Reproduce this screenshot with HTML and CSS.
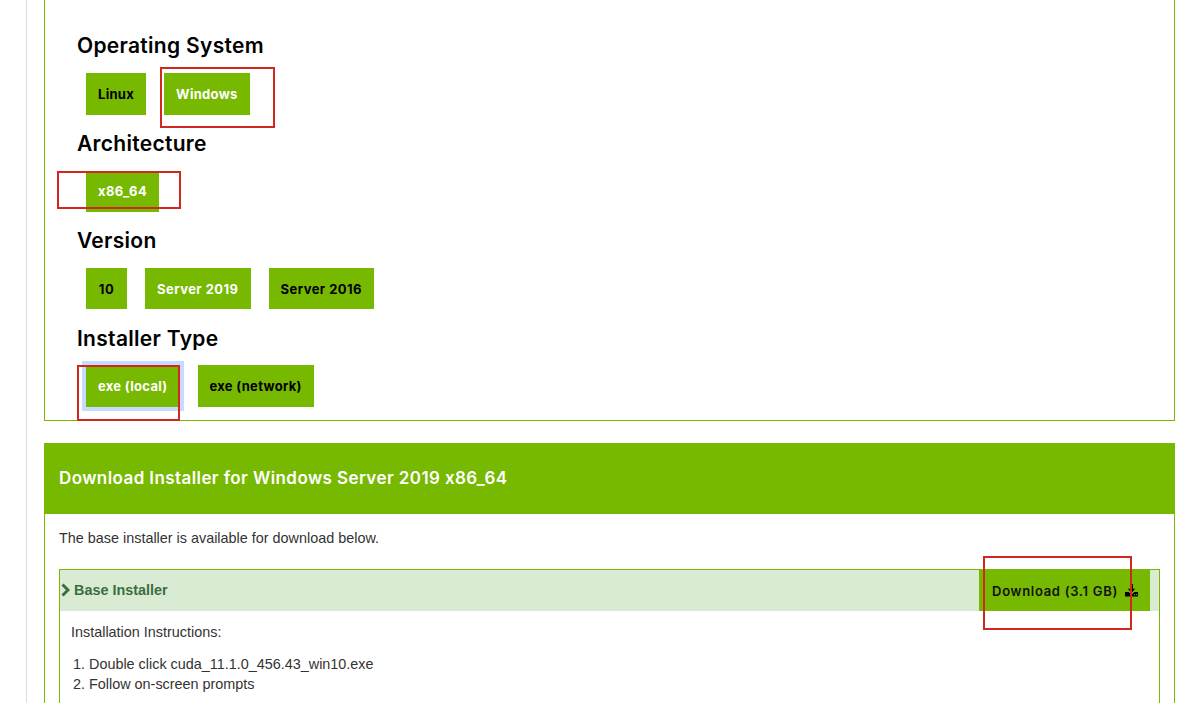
FILE: index.html
```html
<!DOCTYPE html>
<html>
  <head>
    <meta charset="utf-8">
    <link rel="stylesheet" href="styles.css">
    <title>CUDA Toolkit Downloads</title>
  </head>
  <body>
    <div id="page">
      <div id="selector">
        <h2>Operating System</h2>
        <div class="options options-os">
          <a class="opt">Linux</a>
          <a class="opt opt-on">Windows</a>
        </div>
        <h2>Architecture</h2>
        <div class="options options-arch">
          <a class="opt opt-on opt-short">x86_64</a>
        </div>
        <h2>Version</h2>
        <div class="options options-version">
          <a class="opt opt-thin">10</a>
          <a class="opt opt-on opt-thin">Server 2019</a>
          <a class="opt opt-thin">Server 2016</a>
        </div>
        <h2>Installer Type</h2>
        <div class="options options-type">
          <a class="opt opt-on opt-focus">exe (local)</a>
          <a class="opt">exe (network)</a>
        </div>
      </div>

      <div id="download">
        <div id="download-title">Download Installer for Windows Server 2019 x86_64</div>
        <div id="download-body">
          <p class="intro">The base installer is available for download below.</p>
          <div class="installer">
            <div class="installer-head">
              <div class="installer-name">
                <svg class="chevron" width="9" height="14" viewBox="0 0 9 14"><path d="M1.5 1.5 L7 7 L1.5 12.5" fill="none" stroke="#3a6e3f" stroke-width="3"/></svg>
                Base Installer
              </div>
              <a class="download-btn">
                Download (3.1 GB)
                <svg class="save" width="13" height="13" viewBox="0 0 14 14"><path d="M5.500 0h3v5h2.500L7 9.500 3 5h2.500z M0 8.500h4l3 3 3-3h4V13.500H0z" fill="#000"/><rect x="9.500" y="10.800" width="1.200" height="1.200" fill="#76b900"/><rect x="11.800" y="10.800" width="1.200" height="1.200" fill="#76b900"/></svg>
              </a>
            </div>
            <div class="installer-body">
              <p>Installation Instructions:</p>
              <ol>
                <li>Double click cuda_11.1.0_456.43_win10.exe</li>
                <li>Follow on-screen prompts</li>
              </ol>
            </div>
          </div>
        </div>
      </div>
    </div>

    <!-- red boxes drawn on top of the screenshot -->
    <div class="mark mark-os"></div>
    <div class="mark mark-arch"></div>
    <div class="mark mark-type"></div>
    <div class="mark mark-dl"></div>
  </body>
</html>
```

FILE: styles.css
```css
* {
  box-sizing: border-box;
}
html, body {
  height: 703px;
  overflow: hidden;
}
body {
  margin: 0;
  background-color: #fff;
  font-family: "Liberation Sans", Arial, sans-serif;
  font-size: 14.4px;
  color: #333;
}
#page {
  margin-left: 26px;
  padding: 0 15px 0 17px;
  height: 703px;
  border-left: 1px solid #dcdcdc;
  overflow: hidden;
}
#selector {
  height: 421px;
  padding: 32px 0 0 32px;
  border: 1px solid #76b900;
  border-top: 0;
}
h2 {
  margin: 0;
  font-family: Inter, sans-serif;
  font-size: 21px;
  font-weight: 600;
  line-height: 27px;
  letter-spacing: 0.3px;
  color: #000;
}
.options {
  display: flex;
  gap: 18px;
  margin-left: 9px;
  letter-spacing: 0.3px;
}
.options-os {
  margin-top: 14px;
  margin-bottom: 15px;
}
.options-arch {
  margin-top: 16px;
  margin-bottom: 15px;
  letter-spacing: 0.4px;
}
.options-version {
  margin-top: 14px;
  margin-bottom: 16px;
  letter-spacing: 0.46px;
}
.options-type {
  margin-top: 13px;
  letter-spacing: 0.3px;
}
.opt {
  display: flex;
  align-items: center;
  justify-content: center;
  min-width: 41px;
  height: 42px;
  padding: 0 12px;
  background-color: #76b900;
  font-family: Inter, sans-serif;
  font-size: 13px;
  font-weight: 700;
  color: #000;
  font-feature-settings: "calt" 0;
}
.opt-on {
  color: #fff;
}
.opt-short {
  height: 39px;
  padding-bottom: 3px;
}
.opt-thin {
  height: 41px;
}
.opt-focus {
  outline: 4px solid #c6dbff;
}
#download {
  margin-top: 22px;
}
#download-title {
  display: flex;
  align-items: center;
  height: 71px;
  padding: 0 0 2px 15px;
  background-color: #76b900;
  font-family: Inter, sans-serif;
  font-size: 17px;
  font-weight: 600;
  letter-spacing: 0.41px;
  color: #fff;
  font-feature-settings: "calt" 0;
}
#download-body {
  height: 300px;
  padding: 16px 14px 0;
  border-left: 1px solid #76b900;
  border-right: 1px solid #76b900;
}
.intro {
  margin: 0 0 23px 0;
  line-height: 16px;
}
.installer {
  height: 200px;
  border: 1px solid #76b900;
}
.installer-head {
  display: flex;
  justify-content: space-between;
  height: 41px;
  padding-right: 9px;
  background-color: #d9ecd3;
}
.installer-name {
  display: flex;
  align-items: center;
  padding: 0 0 2px 1px;
  gap: 4px;
  font-weight: 700;
  color: #3a6e3f;
}
.download-btn {
  display: flex;
  align-items: center;
  gap: 7px;
  padding: 0 12px 0 13px;
  background-color: #76b900;
  font-family: Inter, sans-serif;
  font-size: 13px;
  font-weight: 600;
  letter-spacing: 0.7px;
  color: #111;
}
.installer-body {
  padding: 13px 11px;
}
.installer-body p {
  margin: 0 0 14px 0;
  line-height: 16px;
}
ol {
  margin: 0;
  padding-left: 18px;
  line-height: 20px;
}
.mark {
  position: absolute;
  border: 2px solid #d0281f;
}
.mark-os {
  left: 160px;
  top: 67px;
  width: 115px;
  height: 61px;
}
.mark-arch {
  left: 57px;
  top: 171px;
  width: 124px;
  height: 38px;
}
.mark-type {
  left: 77px;
  top: 365px;
  width: 103px;
  height: 56px;
}
.mark-dl {
  left: 983px;
  top: 556px;
  width: 149px;
  height: 74px;
}
```
